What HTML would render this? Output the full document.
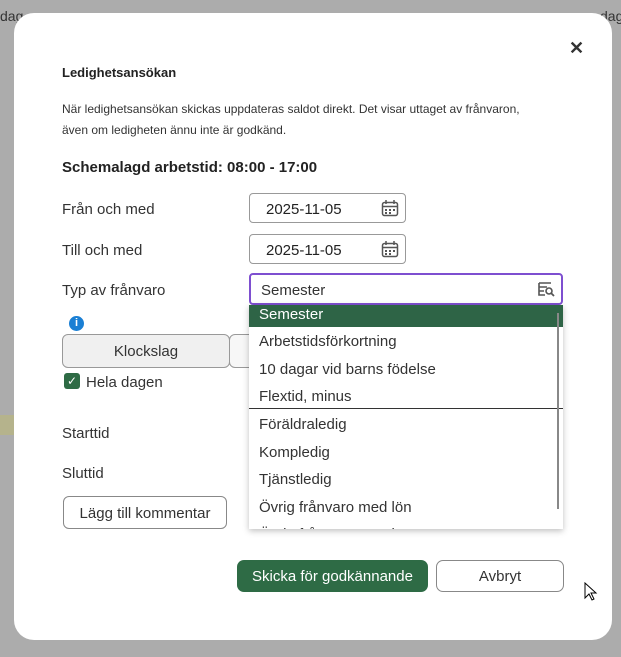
<!DOCTYPE html>
<html><head><style>
body{margin:0;width:621px;height:657px;background:#acacac;position:relative;overflow:hidden;font-family:"Liberation Sans",sans-serif;color:#222}
.a{position:absolute}
.modal{left:14px;top:13px;width:598px;height:627px;background:#fff;border-radius:20px}
.lbl{font-size:15px;color:#333}
.inp{border:1px solid #999;border-radius:4px;background:#fff;height:30px;box-sizing:border-box;font-size:15px;padding:7px 16px 5px}
.opt{left:259px;font-size:15px;color:#333}
</style></head><body>
<div class="a" style="left:0;top:8px;font-size:14px;color:#333">dag</div>
<div class="a" style="left:600px;top:8px;font-size:14px;color:#333">dag</div>
<div class="a" style="left:0;top:415px;width:14px;height:20px;background:#b5b38c"></div>
<div class="a modal"></div>
<div class="a" style="left:569px;top:38px;font-size:18px;font-weight:bold;color:#333">✕</div>
<div class="a" style="left:62px;top:65px;font-size:13px;font-weight:bold">Ledighetsansökan</div>
<div class="a" style="left:62px;top:99px;font-size:12px;line-height:21px;color:#333">När ledighetsansökan skickas uppdateras saldot direkt. Det visar uttaget av frånvaron,<br>även om ledigheten ännu inte är godkänd.</div>
<div class="a" style="left:62px;top:159px;font-size:15px;font-weight:bold">Schemalagd arbetstid: 08:00 - 17:00</div>
<div class="a lbl" style="left:62px;top:201px">Från och med</div>
<div class="a lbl" style="left:62px;top:242px">Till och med</div>
<div class="a lbl" style="left:62px;top:282px">Typ av frånvaro</div>
<div class="a inp" style="left:249px;top:193px;width:157px">2025-11-05</div>
<div class="a inp" style="left:249px;top:234px;width:157px">2025-11-05</div>
<svg class="a" style="left:381px;top:200px" width="18" height="17"><rect x="1.5" y="2.5" width="15" height="13" rx="2" fill="none" stroke="#555" stroke-width="1.5"/><line x1="1.5" y1="6.5" x2="16.5" y2="6.5" stroke="#555" stroke-width="1.5"/><line x1="5" y1="0" x2="5" y2="4" stroke="#555" stroke-width="1.5"/><line x1="13" y1="0" x2="13" y2="4" stroke="#555" stroke-width="1.5"/><g fill="#555"><rect x="4" y="9" width="2" height="2"/><rect x="8" y="9" width="2" height="2"/><rect x="12" y="9" width="2" height="2"/><rect x="4" y="12" width="2" height="2"/><rect x="8" y="12" width="2" height="2"/></g></svg>
<svg class="a" style="left:381px;top:241px" width="18" height="17"><rect x="1.5" y="2.5" width="15" height="13" rx="2" fill="none" stroke="#555" stroke-width="1.5"/><line x1="1.5" y1="6.5" x2="16.5" y2="6.5" stroke="#555" stroke-width="1.5"/><line x1="5" y1="0" x2="5" y2="4" stroke="#555" stroke-width="1.5"/><line x1="13" y1="0" x2="13" y2="4" stroke="#555" stroke-width="1.5"/><g fill="#555"><rect x="4" y="9" width="2" height="2"/><rect x="8" y="9" width="2" height="2"/><rect x="12" y="9" width="2" height="2"/><rect x="4" y="12" width="2" height="2"/><rect x="8" y="12" width="2" height="2"/></g></svg>
<div class="a inp" style="left:249px;top:273px;width:314px;height:32px;border:2px solid #7e4fd0;padding:7px 10px 5px;color:#333">Semester</div>
<svg class="a" style="left:538px;top:281px" width="18" height="16"><path d="M1 2h12M1 6h8M1 10h5M1 2v12h6" fill="none" stroke="#555" stroke-width="1.6"/><circle cx="11" cy="10" r="3" fill="none" stroke="#555" stroke-width="1.6"/><line x1="13" y1="12" x2="16" y2="15" stroke="#555" stroke-width="1.8"/></svg>
<div class="a" style="left:69px;top:316px;width:15px;height:15px;border-radius:50%;background:#1a7fd4;color:#fff;font-size:11px;font-weight:bold;text-align:center;line-height:15px">i</div>
<div class="a" style="left:62px;top:334px;width:166px;height:32px;border:1px solid #999;border-radius:6px;background:#f0f0f0;font-size:15px;text-align:center;line-height:34px;color:#333">Klockslag</div>
<div class="a" style="left:229px;top:334px;width:40px;height:32px;border:1px solid #999;border-radius:6px;background:#f7f7f7"></div>
<div class="a" style="left:64px;top:373px;width:16px;height:16px;border-radius:3px;background:#2e6b45;color:#fff;font-size:12px;text-align:center;line-height:16px">✓</div>
<div class="a lbl" style="left:86px;top:374px">Hela dagen</div>
<div class="a lbl" style="left:62px;top:425px">Starttid</div>
<div class="a lbl" style="left:62px;top:465px">Sluttid</div>
<div class="a" style="left:63px;top:496px;width:162px;height:31px;border:1px solid #888;border-radius:6px;font-size:15px;text-align:center;line-height:33px;color:#333">Lägg till kommentar</div>
<div class="a" style="left:249px;top:305px;width:314px;height:224px;background:#fff;box-shadow:0 2px 6px rgba(0,0,0,.25);overflow:hidden">
 <div style="height:22px;background:#2e6446"></div>
 <div class="a" style="left:0;top:103px;width:314px;height:1px;background:#333"></div>
 <div class="a" style="left:308px;top:8px;width:2px;height:196px;background:#888"></div>
 <div class="a" style="left:10px;top:221px;font-size:15px;color:#333">Övrig frånvaro utan lön</div>
</div>
<div class="a opt" style="top:306px;color:#fff">Semester</div>
<div class="a opt" style="top:333px">Arbetstidsförkortning</div>
<div class="a opt" style="top:361px">10 dagar vid barns födelse</div>
<div class="a opt" style="top:388px">Flextid, minus</div>
<div class="a opt" style="top:416px">Föräldraledig</div>
<div class="a opt" style="top:444px">Kompledig</div>
<div class="a opt" style="top:471px">Tjänstledig</div>
<div class="a opt" style="top:499px">Övrig frånvaro med lön</div>
<div class="a" style="left:237px;top:560px;width:191px;height:32px;border-radius:7px;background:#2e6b45;color:#fff;font-size:15px;text-align:center;line-height:34px">Skicka för godkännande</div>
<div class="a" style="left:436px;top:560px;width:126px;height:30px;border:1px solid #888;border-radius:7px;font-size:15px;text-align:center;line-height:32px;color:#333">Avbryt</div>
<svg class="a" style="left:584px;top:582px" width="14" height="20"><path d="M1 1v15l4-4 3 6 2-1-3-6h5z" fill="#fff" stroke="#000" stroke-width="1"/></svg>
</body></html>
